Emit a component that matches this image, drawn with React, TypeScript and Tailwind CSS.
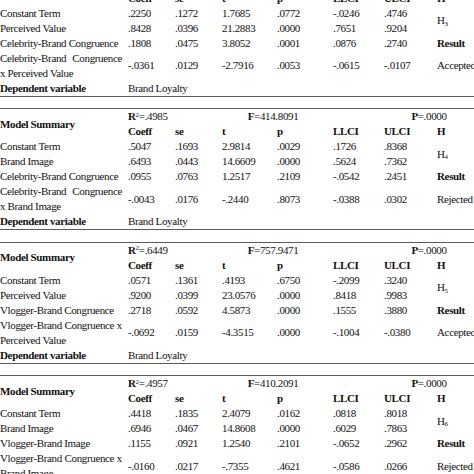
type Row = { label: string; values: string[] };

type Block = {
  partial?: boolean;
  r2?: string;
  f?: string;
  p?: string;
  h: string;
  rows: Row[];
  inter: [string, string];
  interValues: string[];
  decision: string;
};

const BLOCKS: Block[] = [
  {
    partial: true,
    h: "3",
    rows: [
      { label: "Constant Term", values: [".2250", ".1272", "1.7685", ".0772", "-.0246", ".4746"] },
      { label: "Perceived Value", values: [".8428", ".0396", "21.2883", ".0000", ".7651", ".9204"] },
      { label: "Celebrity-Brand Congruence", values: [".1808", ".0475", "3.8052", ".0001", ".0876", ".2740"] },
    ],
    inter: ["Celebrity-Brand Congruence", "x Perceived Value"],
    interValues: ["-.0361", ".0129", "-2.7916", ".0053", "-.0615", "-.0107"],
    decision: "Accepted",
  },
  {
    r2: ".4985",
    f: "414.8091",
    p: ".0000",
    h: "4",
    rows: [
      { label: "Constant Term", values: [".5047", ".1693", "2.9814", ".0029", ".1726", ".8368"] },
      { label: "Brand Image", values: [".6493", ".0443", "14.6609", ".0000", ".5624", ".7362"] },
      { label: "Celebrity-Brand Congruence", values: [".0955", ".0763", "1.2517", ".2109", "-.0542", ".2451"] },
    ],
    inter: ["Celebrity-Brand Congruence", "x Brand Image"],
    interValues: ["-.0043", ".0176", "-.2440", ".8073", "-.0388", ".0302"],
    decision: "Rejected",
  },
  {
    r2: ".6449",
    f: "757.9471",
    p: ".0000",
    h: "5",
    rows: [
      { label: "Constant Term", values: [".0571", ".1361", ".4193", ".6750", "-.2099", ".3240"] },
      { label: "Perceived Value", values: [".9200", ".0399", "23.0576", ".0000", ".8418", ".9983"] },
      { label: "Vlogger-Brand Congruence", values: [".2718", ".0592", "4.5873", ".0000", ".1555", ".3880"] },
    ],
    inter: ["Vlogger-Brand Congruence x", "Perceived Value"],
    interValues: ["-.0692", ".0159", "-4.3515", ".0000", "-.1004", "-.0380"],
    decision: "Accepted",
  },
  {
    r2: ".4957",
    f: "410.2091",
    p: ".0000",
    h: "6",
    rows: [
      { label: "Constant Term", values: [".4418", ".1835", "2.4079", ".0162", ".0818", ".8018"] },
      { label: "Brand Image", values: [".6946", ".0467", "14.8608", ".0000", ".6029", ".7863"] },
      { label: "Vlogger-Brand Image", values: [".1155", ".0921", "1.2540", ".2101", "-.0652", ".2962"] },
    ],
    inter: ["Vlogger-Brand Congruence x", "Brand Image"],
    interValues: ["-.0160", ".0217", "-.7355", ".4621", "-.0586", ".0266"],
    decision: "Rejected",
  },
];

const HEADERS = ["Coeff", "se", "t", "p", "LLCI", "ULCI", "H"];

function SummaryTable({ block }: { block: Block }) {
  return (
    <div
      className={
        block.partial
          ? "-mt-[9.5px] border-b-[1.5px] border-[#5c5c5c]"
          : "mt-[11.5px] border-y-[1.5px] border-[#5c5c5c]"
      }
    >
      <div className="grid grid-cols-[128px_47px_47px_55px_56px_51px_53px_37px] leading-[15px]">
        {block.partial ? (
          <div />
        ) : (
          <>
            <div className="row-span-2 self-center font-bold">Model Summary</div>
            <div className="col-span-2">
              <span className="font-bold">R</span>
              <sup className="text-[7px]">2</sup>=
              {block.r2}
            </div>
            <div className="col-span-2 pr-[9px] text-center">
              <span className="font-bold">F</span>={block.f}
            </div>
            <div />
            <div className="col-span-2 text-center">
              <span className="font-bold">P</span>={block.p}
            </div>
          </>
        )}
        {HEADERS.map((h) => (
          <div key={h} className="font-bold">
            {h}
          </div>
        ))}

        {block.rows.map((row, i) => (
          <div key={row.label + i} className="contents">
            <div className="whitespace-nowrap">{row.label}</div>
            {row.values.map((v, j) => (
              <div key={j}>{v}</div>
            ))}
            {i === 0 && (
              <div className="row-span-2 self-center whitespace-nowrap">
                H<sub className="text-[7px]">{block.h}</sub>
              </div>
            )}
            {i === 2 && <div className="font-bold">Result</div>}
          </div>
        ))}

        <div className="w-[122px]">
          <div className="whitespace-nowrap [text-align-last:justify]">{block.inter[0]}</div>
          <div className="whitespace-nowrap">{block.inter[1]}</div>
        </div>
        {block.interValues.map((v, j) => (
          <div key={j} className="self-center">
            {v}
          </div>
        ))}
        <div className="self-center whitespace-nowrap">{block.decision}</div>

        <div className="font-bold">Dependent variable</div>
        <div className="col-span-7">Brand Loyalty</div>
      </div>
    </div>
  );
}

export default function App() {
  return (
    <div className="h-[474px] w-[474px] overflow-hidden bg-white text-[11px] tracking-[-0.35px] text-[#111] [font-family:Liberation_Serif,serif]">
      {BLOCKS.map((b, i) => (
        <SummaryTable key={i} block={b} />
      ))}
    </div>
  );
}
